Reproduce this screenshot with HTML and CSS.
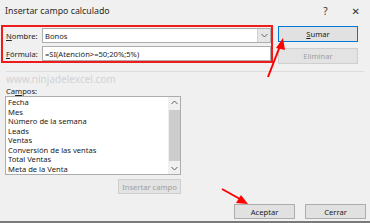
FILE: index.html
```html
<!DOCTYPE html>
<html lang="es">
<head>
<meta charset="utf-8">
<title>Insertar campo calculado</title>
<link rel="stylesheet" href="styles.css">
</head>
<body>
<div class="dialog">
  <div class="titlebar">
    <span class="title">Insertar campo calculado</span>
    <span class="tb-btns"><span class="help">?</span><span class="close">✕</span></span>
  </div>
  <div class="top">
    <div class="fields">
      <div class="row">
        <label class="lbl"><u>N</u>ombre:</label>
        <div class="combo"><span class="val">Bonos</span><span class="drop"><svg width="7" height="5" viewBox="0 0 7 5"><path d="M0.5 1 L3.5 4 L6.5 1" fill="none" stroke="#606060" stroke-width="1"/></svg></span></div>
      </div>
      <div class="row">
        <label class="lbl"><u>F</u>órmula:</label>
        <div class="input"><span class="val">=SI(Atención&gt;=50;20%;5%)</span></div>
      </div>
    </div>
    <div class="side">
      <button class="btn primary"><u>S</u>umar</button>
      <button class="btn disabled">Eliminar</button>
    </div>
  </div>
  <div class="sep"></div>
  <div class="watermark">www.ninjadelexcel.com</div>
  <div class="campos-lbl">Ca<u>m</u>pos:</div>
  <div class="listbox">
    <ul class="items">
      <li>Fecha</li>
      <li>Mes</li>
      <li>Número de la semana</li>
      <li>Leads</li>
      <li>Ventas</li>
      <li>Conversión de las ventas</li>
      <li>Total Ventas</li>
      <li>Meta de la Venta</li>
    </ul>
    <div class="scroll">
      <svg class="arr" width="7" height="5" viewBox="0 0 7 5"><path d="M0.5 4 L3.5 1 L6.5 4" fill="none" stroke="#606060" stroke-width="1"/></svg>
      <div class="thumb"></div>
      <svg class="arr" width="7" height="5" viewBox="0 0 7 5"><path d="M0.5 1 L3.5 4 L6.5 1" fill="none" stroke="#606060" stroke-width="1"/></svg>
    </div>
  </div>
  <div class="insert-row"><button class="btn disabled ins">Insertar campo</button></div>
  <div class="footer">
    <button class="btn foot">Aceptar</button>
    <button class="btn foot">Cerrar</button>
  </div>
  <div class="bottom-line"></div>
  <svg class="arrows" width="370" height="223" viewBox="0 0 370 223">
    <line x1="268" y1="77" x2="280" y2="46" stroke="#ff0000" stroke-width="2"/>
    <polygon points="283,38 276,48 285,50" fill="#ff0000"/>
    <line x1="222" y1="189" x2="240" y2="199" stroke="#ff0000" stroke-width="2"/>
    <polygon points="248,204 236,203 241,195" fill="#ff0000"/>
  </svg>
</div>
</body>
</html>
```
FILE: styles.css
```css
* { box-sizing: border-box; }
html, body { margin: 0; padding: 0; }
body {
  width: 370px;
  height: 223px;
  overflow: hidden;
  background: #f0f0f0;
  font-family: "Noto Sans", "DejaVu Sans", sans-serif;
  font-size: 7.6px;
  color: #222;
}
.dialog {
  position: relative;
  width: 370px;
  height: 223px;
}
.titlebar {
  height: 25px;
  display: flex;
  align-items: center;
  justify-content: space-between;
  padding: 0 10px 3px 5px;
}
.title { font-size: 8.8px; color: #2a2a2a; }
.tb-btns { display: flex; gap: 24px; font-size: 10px; color: #333; }
.close { font-size: 10px; }
.top {
  display: flex;
  align-items: flex-start;
}
.fields {
  margin-left: 1px;
  width: 272px;
  height: 38px;
  border: 2px solid #ee1c1c;
  padding: 1px 0 0 3px;
  display: flex;
  flex-direction: column;
  gap: 3px;
}
.row { display: flex; align-items: center; height: 15px; }
.lbl { width: 36px; }
.combo, .input {
  flex: 1;
  height: 15px;
  background: #fff;
  border: 1px solid #adadad;
  display: flex;
  align-items: center;
  padding-left: 2px;
}
.val { flex: 1; }
.drop {
  width: 13px;
  height: 13px;
  background: #e6e6e6;
  border-left: 1px solid #d0d0d0;
  display: flex;
  align-items: center;
  justify-content: center;
}
.side {
  margin-left: 5px;
  margin-top: 1px;
  display: flex;
  flex-direction: column;
  gap: 6px;
}
.btn {
  font-family: inherit;
  font-size: 7.6px;
  color: #222;
  background: #e1e1e1;
  border: 1px solid #adadad;
  padding: 0;
  height: 16px;
  width: 80px;
}
.btn.primary { border-color: #0078d7; }
.btn.disabled { color: #a0a0a0; background: #e3e3e3; border-color: #cfcfcf; }
.sep {
  margin: 7px 6px 0 6px;
  height: 1px;
  background: #dcdcdc;
}
.watermark {
  margin-left: 6px;
  height: 14px;
  line-height: 14px;
  font-size: 10px;
  color: #d2d2d2;
}
.campos-lbl {
  margin-left: 6px;
  height: 10px;
  line-height: 10px;
}
.listbox {
  margin-left: 5px;
  width: 176px;
  height: 79px;
  background: #fff;
  border: 1px solid #adadad;
  display: flex;
}
.items {
  list-style: none;
  margin: 0;
  padding: 1px 0 0 2px;
  flex: 1;
}
.items li { height: 9.5px; line-height: 9.5px; white-space: nowrap; }
.scroll {
  width: 12px;
  display: flex;
  flex-direction: column;
  align-items: center;
  background: #f0f0f0;
}
.arr { margin: 3px 0; }
.thumb { width: 11px; flex: 1; background: #cdcdcd; margin: 2px 0; }
.insert-row {
  display: flex;
  width: 181px;
  justify-content: flex-end;
  margin-top: 4px;
}
.btn.ins { width: 63px; height: 15px; }
.footer {
  display: flex;
  justify-content: flex-end;
  gap: 10px;
  padding-right: 4px;
  margin-top: 10px;
}
.btn.foot { width: 61px; height: 15px; }
.bottom-line {
  position: absolute;
  left: 0;
  right: 0;
  bottom: 0;
  height: 2px;
  background: #7a7a7a;
}
.arrows { position: absolute; left: 0; top: 0; pointer-events: none; }
```
